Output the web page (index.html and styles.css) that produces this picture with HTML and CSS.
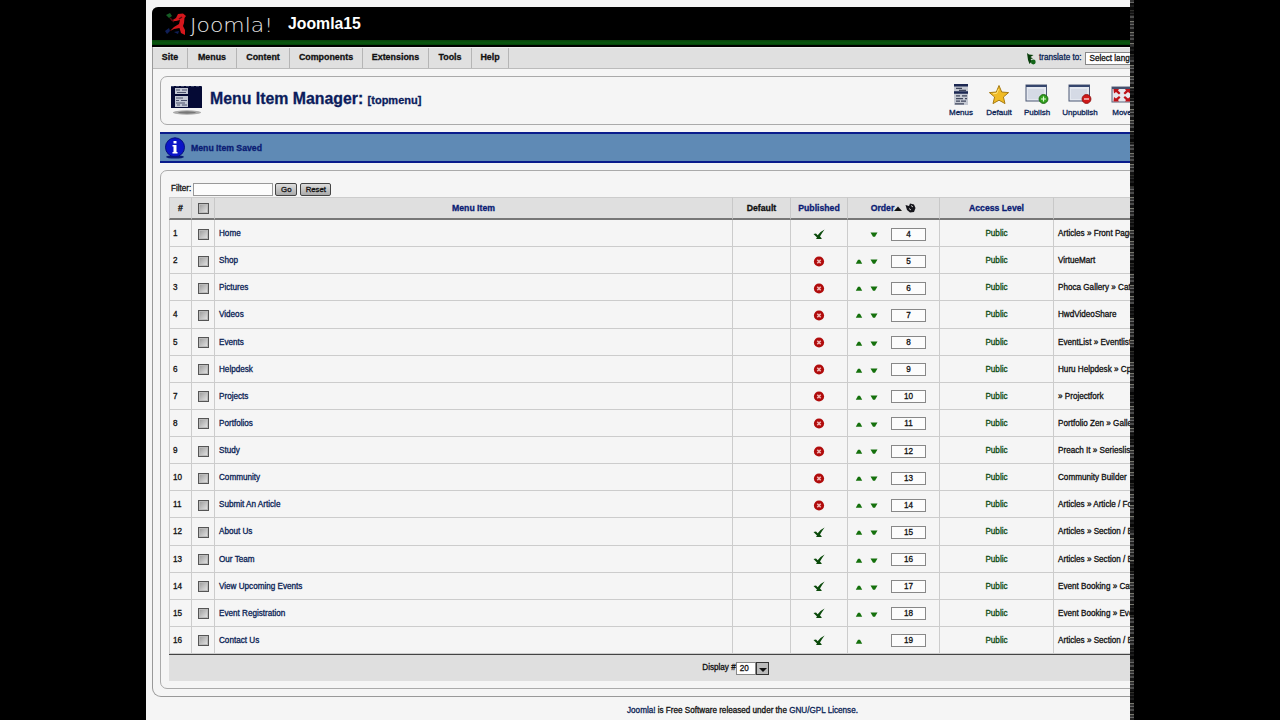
FILE: index.html
```
<!DOCTYPE html>
<html lang="en">

<head>
   <meta charset="UTF-8">
   <meta name="viewport" content="width=device-width, initial-scale=1.0">
   <title>Joomla15 - Menu Item Manager</title>
   <link rel="stylesheet" href="styles.css">
</head>

<body>
   <!-- shared icons -->
   <svg class="defs">
      <symbol id="tick" viewBox="0 0 12 11">
         <path d="M.5 5 L3 4.600 L4.700 6.200 Q7.500 2.500 11.600 .6 Q9 4 7 7.600 L8.600 9.200 L8.600 10 L3 10 L4 8.600 Z" fill="#0b4a0b" />
      </symbol>
      <symbol id="cross" viewBox="0 0 11 11">
         <circle cx="5.5" cy="5.5" r="5.1" fill="#b00c0c" />
         <path d="M3.8 3.8 L7.2 7.2 M7.2 3.8 L3.8 7.2" stroke="#f2b8b8" stroke-width="1.6" />
      </symbol>
      <symbol id="up" viewBox="0 0 8 5">
         <path d="M.8 4.8 L3 .8 H5 L7.2 4.8 Z" fill="#14700c" />
      </symbol>
      <symbol id="down" viewBox="0 0 8 5">
         <path d="M.5 .4 H7.5 L5 4.7 H3 Z" fill="#14700c" />
      </symbol>
      <symbol id="window" viewBox="0 0 24 21">
         <rect x="1" y="1" width="20.5" height="16" fill="#e4e8f0" stroke="#4c5874" />
         <path d="M1 2 H21.5" stroke="#35456d" stroke-width="2" />
         <path d="M3 5 H19 V15 H3 Z" fill="#d5dae5" />
      </symbol>
      <symbol id="lists" viewBox="0 0 16 21">
         <path d="M1 0 H15 V21 H1 Z" fill="#c5c9d2" />
         <path d="M1 1.2 H15 M1 8.5 H15" stroke="#1c2852" stroke-width="2.4" />
         <path d="M3 4.3 H9 M6 6.3 H13 M3 11.8 H7 M9 11.8 H14 M3 14.6 H10 M12 14.6 H14 M3 17.2 H7 M8 17.2 H13 M2 19.8 H11" stroke="#3f465c" stroke-width="1.2" />
      </symbol>
   </svg>

   <div class="screen">
      <div class="page">
         <div class="border-top">
            <svg class="logo" width="112" height="28" viewBox="0 0 112 28">
               <path d="M4 5 L8 3 L10 6 L7 8 Z" fill="#175e26" />
               <path d="M9 11 L14 8 L16 4 L21 3.500 L24 6 L22.500 8 L22 13 L21 16 L23 20 L23 25 L19 23 L17.500 18 L12 19 L8 21 L12 17 L17 14 L18 10 L14 11 Z" fill="#d5171c" />
               <path d="M8 8 L12 12 M17 9 L20 7" stroke="#5a0b0e" stroke-width="1.500" />
               <path d="M3 21 L7 18 L8 21 L5 24 Z M12 22 L17 21 L16 24 Z" fill="#101f57" />
               <text x="28" y="22" textLength="83" lengthAdjust="spacingAndGlyphs">Joomla!</text>
            </svg>
            <span class="title">Joomla15</span>
         </div>
         <div class="header-box">
            <ul class="menu">
               <li class="m-site">Site</li>
               <li class="m-menus">Menus</li>
               <li class="m-content">Content</li>
               <li class="m-components">Components</li>
               <li class="m-extensions">Extensions</li>
               <li class="m-tools">Tools</li>
               <li class="m-help">Help</li>
            </ul>
            <div class="translate">
               <svg width="10" height="13" viewBox="0 0 10 13">
                  <path d="M1 1 L3 2.500 L7.500 3 L4.500 5 L7 6.500 L4.500 7 L6 9 L3.500 12 L2 8 Z" fill="#083e0a" />
                  <circle cx="7.3" cy="10" r="2.4" fill="#14661a" />
               </svg>
               <span>translate to:</span>
               <span class="lang">Select language</span>
            </div>
         </div>

         <div class="content">
            <div class="toolbar-box">
               <svg class="page-icon" width="32" height="30" viewBox="0 0 32 30">
                  <ellipse cx="16" cy="26.500" rx="14" ry="2.2" fill="#aaa" />
                  <ellipse cx="16" cy="26.500" rx="9" ry="1.2" fill="#777" />
                  <rect x="0" y="0" width="31" height="22" fill="#050a35" />
                  <path d="M4 2 H17 V8 H4 Z M4 10 H17 V21 H4 Z" fill="#c2c7d4" />
                  <path d="M5 4 H9 M11 4 H16 M6 6.500 H15 M5 12 H12 M5 14.5 H8 M10 14.5 H16 M5 17 H14 M6 19 H9 M11 19 H16" stroke="#4c536e" />
                  <path d="M0 .5 H31" stroke="#3b4468" stroke-dasharray="3 2" />
               </svg>
               <h1>Menu Item Manager: <small>[topmenu]</small></h1>
               <div class="tool t-menus">
                  <svg width="16" height="21"><use href="#lists" /></svg>
                  Menus
               </div>
               <div class="tool t-default">
                  <svg width="22" height="21" viewBox="0 0 22 21">
                     <path d="M11 1.5 L13.7 8 L20.6 8.6 L15.4 13 L17 19.6 L11 16.2 L5 19.6 L6.6 13 L1.4 8.6 L8.3 8 Z" fill="#f0bb24" stroke="#a87c14" />
                     <path d="M10.6 5 L8.8 9.3 L5 9.8" fill="none" stroke="#ffe27a" />
                  </svg>
                  Default
               </div>
               <div class="tool t-publish">
                  <svg width="24" height="21" viewBox="0 0 24 21">
                     <use href="#window" />
                     <circle cx="18.5" cy="15" r="4.4" fill="#32a01e" stroke="#1b6811" />
                     <path d="M16 15 H21 M18.5 12.5 V17.5" stroke="#e0ffd5" stroke-width="1.2" />
                  </svg>
                  Publish
               </div>
               <div class="tool t-unpublish">
                  <svg width="24" height="21" viewBox="0 0 24 21">
                     <use href="#window" />
                     <circle cx="18.5" cy="15" r="4.4" fill="#d01818" stroke="#941010" />
                     <path d="M16 15 H21" stroke="#ffe0e0" stroke-width="1.3" />
                  </svg>
                  Unpublish
               </div>
               <div class="tool t-move">
                  <svg width="22" height="21" viewBox="0 0 22 21">
                     <rect x="1" y="3" width="20" height="15" fill="#e7e7ec" stroke="#59627a" />
                     <path d="M1 4 H21" stroke="#46506e" stroke-width="2" />
                     <path d="M2.500 5 H8 L7 6.500 L9.500 9 L8 10.500 L5 8 L3 9.500 Z M19.500 5 H14 L15 6.500 L12.500 9 L14 10.500 L17 8 L19 9.500 Z M2.500 17.500 H8 L7 16 L9.500 13.500 L8 12 L5 14.500 L3 13 Z M19.500 17.500 H14 L15 16 L12.500 13.500 L14 12 L17 14.500 L19 13 Z" fill="#bd1218" />
                  </svg>
                  Move
               </div>
            </div>

            <div class="message">
               <svg width="22" height="22" viewBox="0 0 22 22">
                  <ellipse cx="11" cy="20" rx="9" ry="1.6" fill="#0a1c74" />
                  <circle cx="11" cy="10.300" r="9.500" fill="#0a14c8" stroke="#06107c" />
                  <path d="M9.500 4 H12.500 V6.500 H9.500 Z M8.500 8 H12.500 V15 H13.500 V16.500 H8.500 V15 H9.500 V9.500 H8.500 Z" fill="#fff" />
               </svg>
               <span>Menu Item Saved</span>
            </div>

            <div class="element-box">
               <div class="filter">
                  <label for="search">Filter:</label>
                  <input type="text" id="search">
                  <button class="go">Go</button>
                  <button class="reset">Reset</button>
               </div>
               <table class="adminlist">
                  <colgroup>
                     <col class="c-num"><col class="c-check"><col class="c-item"><col class="c-default"><col class="c-pub"><col class="c-order"><col class="c-access"><col class="c-type">
                  </colgroup>
                  <thead>
                     <tr>
                        <th class="num">#</th>
                        <th><input type="checkbox"></th>
                        <th class="link">Menu Item</th>
                        <th>Default</th>
                        <th class="link">Published</th>
                        <th class="link">
                           <div class="order-head">
                              Order<svg width="8" height="5" viewBox="0 0 8 5"><path d="M0 5 L4 .5 L8 5 Z" fill="#111" /></svg>
                              <svg class="save" width="11" height="10" viewBox="0 0 11 10">
                                 <path d="M.5 2 L4 3 L5 .5 L9 1.500 L10.500 5 L9 9 L5 9.500 L2 7 Z" fill="#16161c" />
                                 <path d="M6 2.500 L8 4 M4 5.500 L6 7" stroke="#ccc" />
                              </svg>
                           </div>
                        </th>
                        <th class="link">Access Level</th>
                        <th></th>
                     </tr>
                  </thead>
                  <tbody id="rows"></tbody>
               </table>
               <div class="pagination">
                  <span>Display #</span><span class="limit">20</span><span class="arrow"><svg width="8" height="4" viewBox="0 0 8 4"><path d="M0 0 H8 L4 4 Z" fill="#111" /></svg></span>
               </div>
            </div>
         </div>
      </div>
      <p class="footer"><a>Joomla!</a> is Free Software released under the <a>GNU/GPL License.</a></p>
   </div>
   <div class="edge"></div>

   <script>
      // name, published, type
      const items = [
         ["Home", 1, "Articles » Front Page"],
         ["Shop", 0, "VirtueMart"],
         ["Pictures", 0, "Phoca Gallery » Categories"],
         ["Videos", 0, "HwdVideoShare"],
         ["Events", 0, "EventList » Eventlist"],
         ["Helpdesk", 0, "Huru Helpdesk » Cpanel"],
         ["Projects", 0, "» Projectfork"],
         ["Portfolios", 0, "Portfolio Zen » Gallery"],
         ["Study", 0, "Preach It » Serieslist"],
         ["Community", 0, "Community Builder"],
         ["Submit An Article", 0, "Articles » Article / Form"],
         ["About Us", 1, "Articles » Section / Blog"],
         ["Our Team", 1, "Articles » Section / Blog"],
         ["View Upcoming Events", 1, "Event Booking » Categories"],
         ["Event Registration", 1, "Event Booking » Events"],
         ["Contact Us", 1, "Articles » Section / Blog"]
      ];
      const arrow = (id, show) => `<svg class="arrow-${id}" width="8" height="5">${show ? `<use href="#${id}" />` : ""}</svg>`;

      document.getElementById('rows').innerHTML = items.map(([name, published, type], i) => `
         <tr>
            <td>${i + 1}</td>
            <td class="center"><input type="checkbox"></td>
            <td class="name">${name}</td>
            <td></td>
            <td class="center"><svg width="12" height="11"><use href="#${published ? "tick" : "cross"}" /></svg></td>
            <td><div class="order">${arrow("up", i > 0)}${arrow("down", i < items.length - 1)}<input type="text" value="${i + 4}"></div></td>
            <td class="center public">Public</td>
            <td>${type}</td>
         </tr>`).join("");
   </script>
</body>

</html>
```
FILE: styles.css
```
* {
   box-sizing: border-box;
}

body {
   margin: 0;
   height: 720px;
   padding-left: 146px;
   display: flex;
   overflow: hidden;
   background-color: #000;
   color: #111;
   font-family: "Liberation Sans", Arial, sans-serif;
   font-size: 8.15px;
   line-height: 10px;
   -webkit-text-stroke: 0.3px;
}

svg {
   display: block;
   flex: none;
}

.defs {
   position: absolute;
   width: 0;
   height: 0;
}

.screen {
   width: 984px;
   height: 720px;
   padding: 7px 0 0 6px;
   overflow: hidden;
   background-color: #f5f5f5;
}

/* torn strip along the right side of the capture */
.edge {
   width: 4px;
   height: 720px;
   background:
      repeating-linear-gradient(0deg, transparent 0 17px, rgba(0, 0, 0, .6) 17px 29px, transparent 29px 43px),
      repeating-linear-gradient(0deg, #222 0 2px, #666 2px 3px, #333 3px 5px, #77776e 5px 6px, #151515 6px 9px, #4a4a4a 9px 11px);
}

.page {
   width: 1181px;
   height: 690px;
   border: 1px solid #999;
   border-top: none;
   border-radius: 6px 6px 9px 9px;
}

/* header */
.border-top {
   height: 40px;
   margin-left: -1px;
   padding: 0 0 7px 10px;
   display: flex;
   align-items: center;
   border-radius: 6px 0 0 0;
   background: linear-gradient(#000 33px, #0a420c 33px, #0a5a10 36px, #06400a 38px, #000 38px);
}

.logo text {
   font-family: "DejaVu Sans Light", "Lato", sans-serif;
   font-weight: 200;
   font-size: 20px;
   fill: #e8e8e8;
   -webkit-text-stroke: 0;
}

.title {
   margin-left: 14px;
   color: #fff;
   font-size: 15.8px;
   font-weight: bold;
   -webkit-text-stroke: 0;
}

.header-box {
   height: 22px;
   display: flex;
   background-color: #e0e0e0;
   border-bottom: 1px solid #bbb;
   border-top: 1px solid #eee;
}

.menu {
   margin: 0;
   padding: 0;
   width: 873px;
   display: flex;
   list-style: none;
   font-size: 8.9px;
   font-weight: bold;
   line-height: 19px;
   text-align: center;
}

.menu li {
   border-right: 1px solid #b5b5b5;
}

.m-site { width: 35px; }
.m-menus { width: 49px; }
.m-content { width: 53px; }
.m-components { width: 73px; }
.m-extensions { width: 66px; }
.m-tools { width: 43px; }
.m-help { width: 37px; }

.translate {
   display: flex;
   align-items: center;
   color: #0b2455;
   white-space: nowrap;
}

.translate > span {
   margin-left: 3px;
}

.translate .lang {
   width: 90px;
   height: 13px;
   margin-left: 4px;
   padding-left: 3px;
   border: 1px solid #888;
   background-color: #fff;
   color: #111;
   line-height: 12px;
}

.content {
   padding: 7px 8px 0 7px;
}

/* toolbar */
.toolbar-box {
   height: 49px;
   padding-left: 10px;
   display: flex;
   align-items: center;
   border: 1px solid #aaa;
   border-radius: 7px;
}

h1 {
   width: 732px;
   margin: -2px 0 0 7px;
   color: #0b1c5c;
   font-size: 15.85px;
   line-height: 20px;
}

h1 small {
   font-size: 11px;
}

.tool {
   display: flex;
   flex-direction: column;
   align-items: center;
   gap: 2px;
   color: #0b2455;
   font-size: 8px;
   line-height: 11px;
}

.t-menus { width: 38px; }
.t-default { width: 38px; }
.t-publish { width: 38px; }
.t-unpublish { width: 48px; }
.t-move { width: 36px; }

.message {
   height: 31px;
   margin-top: 7px;
   padding-left: 4px;
   display: flex;
   align-items: center;
   gap: 5px;
   border-top: 2px solid #0a1c8c;
   border-bottom: 2px solid #0a1c8c;
   background-color: #5f8ab5;
   color: #0a1c74;
   font-size: 8.7px;
   font-weight: bold;
}

/* list */
.element-box {
   height: 519px;
   margin-top: 7px;
   padding: 10px 8px 0;
   border: 1px solid #aaa;
   border-radius: 7px;
}

.filter {
   height: 16px;
   padding-left: 2px;
   display: flex;
   align-items: center;
}

input,
button {
   margin: 0;
   padding: 0;
   appearance: none;
   font: inherit;
   color: inherit;
}

#search {
   width: 80px;
   height: 13px;
   margin: 0 2px;
   border: 1px solid #999;
   background-color: #fcfcfc;
}

button {
   height: 13px;
   border: 1px solid #444;
   border-radius: 2px;
   background: linear-gradient(#ddd, #aaa);
   font-size: 7.8px;
   line-height: 12px;
}

.filter,
button {
   -webkit-text-stroke: 0.3px;
}

.go {
   width: 22px;
}

.reset {
   width: 31px;
   margin-left: 3px;
}

.adminlist {
   width: 1147px;
   table-layout: fixed;
   border-collapse: separate;
   border-spacing: 0;
}

.c-num { width: 23px; }
.c-check { width: 23px; }
.c-item { width: 518px; }
.c-default { width: 58px; }
.c-pub { width: 57px; }
.c-order { width: 92px; }
.c-access { width: 114px; }

th {
   height: 23px;
   padding: 0;
   border-right: 1px solid #c8c8c8;
   border-top: 1px solid #ccc;
   border-bottom: 2px solid #777;
   background-color: #dfdfdf;
   font-size: 8.7px;
}

th.link {
   color: #0a1c74;
}

.order-head {
   display: flex;
   align-items: center;
   justify-content: center;
}

.order-head .save {
   margin-left: 3px;
}

td {
   height: 27.125px;
   padding: 2px 4px 0;
   border-right: 1px solid #ccc;
   border-bottom: 1px solid #ccc;
   white-space: nowrap;
}

td:first-child,
th:first-child {
   border-left: 1px solid #ccc;
}

td:first-child {
   padding-left: 3px;
}

.center {
   text-align: center;
}

.center svg {
   margin: 0 auto;
}

.name {
   color: #0b2455;
}

.public {
   color: #0b4a12;
}

input[type="checkbox"] {
   display: block;
   width: 11px;
   height: 11px;
   margin: 0 auto;
   border: 1px solid #555;
   background: linear-gradient(135deg, #999, #e8e8e8);
   box-shadow: inset 0 0 0 1px #bbb;
}

.order {
   padding-left: 3px;
   display: flex;
   align-items: center;
}

.order svg {
   margin: 1px 7px 0 0;
}

.order input {
   width: 35px;
   height: 13px;
   margin-left: 6px;
   border: 1px solid #888;
   background-color: #fcfcfc;
   text-align: center;
}

.pagination {
   height: 27px;
   width: 1147px;
   padding-right: 14px;
   display: flex;
   align-items: center;
   justify-content: center;
   border-top: 1px solid #444;
   background-color: #dfdfdf;
}

.limit {
   width: 20px;
   height: 13px;
   padding-left: 3px;
   border: 1px solid #888;
   background-color: #fff;
   line-height: 12px;
}

.arrow {
   width: 13px;
   height: 13px;
   padding: 5px 0 0 2px;
   border: 1px solid #333;
   background-color: #bbb;
}

.footer {
   width: 1181px;
   margin: 9px 0 0;
   text-align: center;
}

.footer a {
   color: #0b2455;
}
```
